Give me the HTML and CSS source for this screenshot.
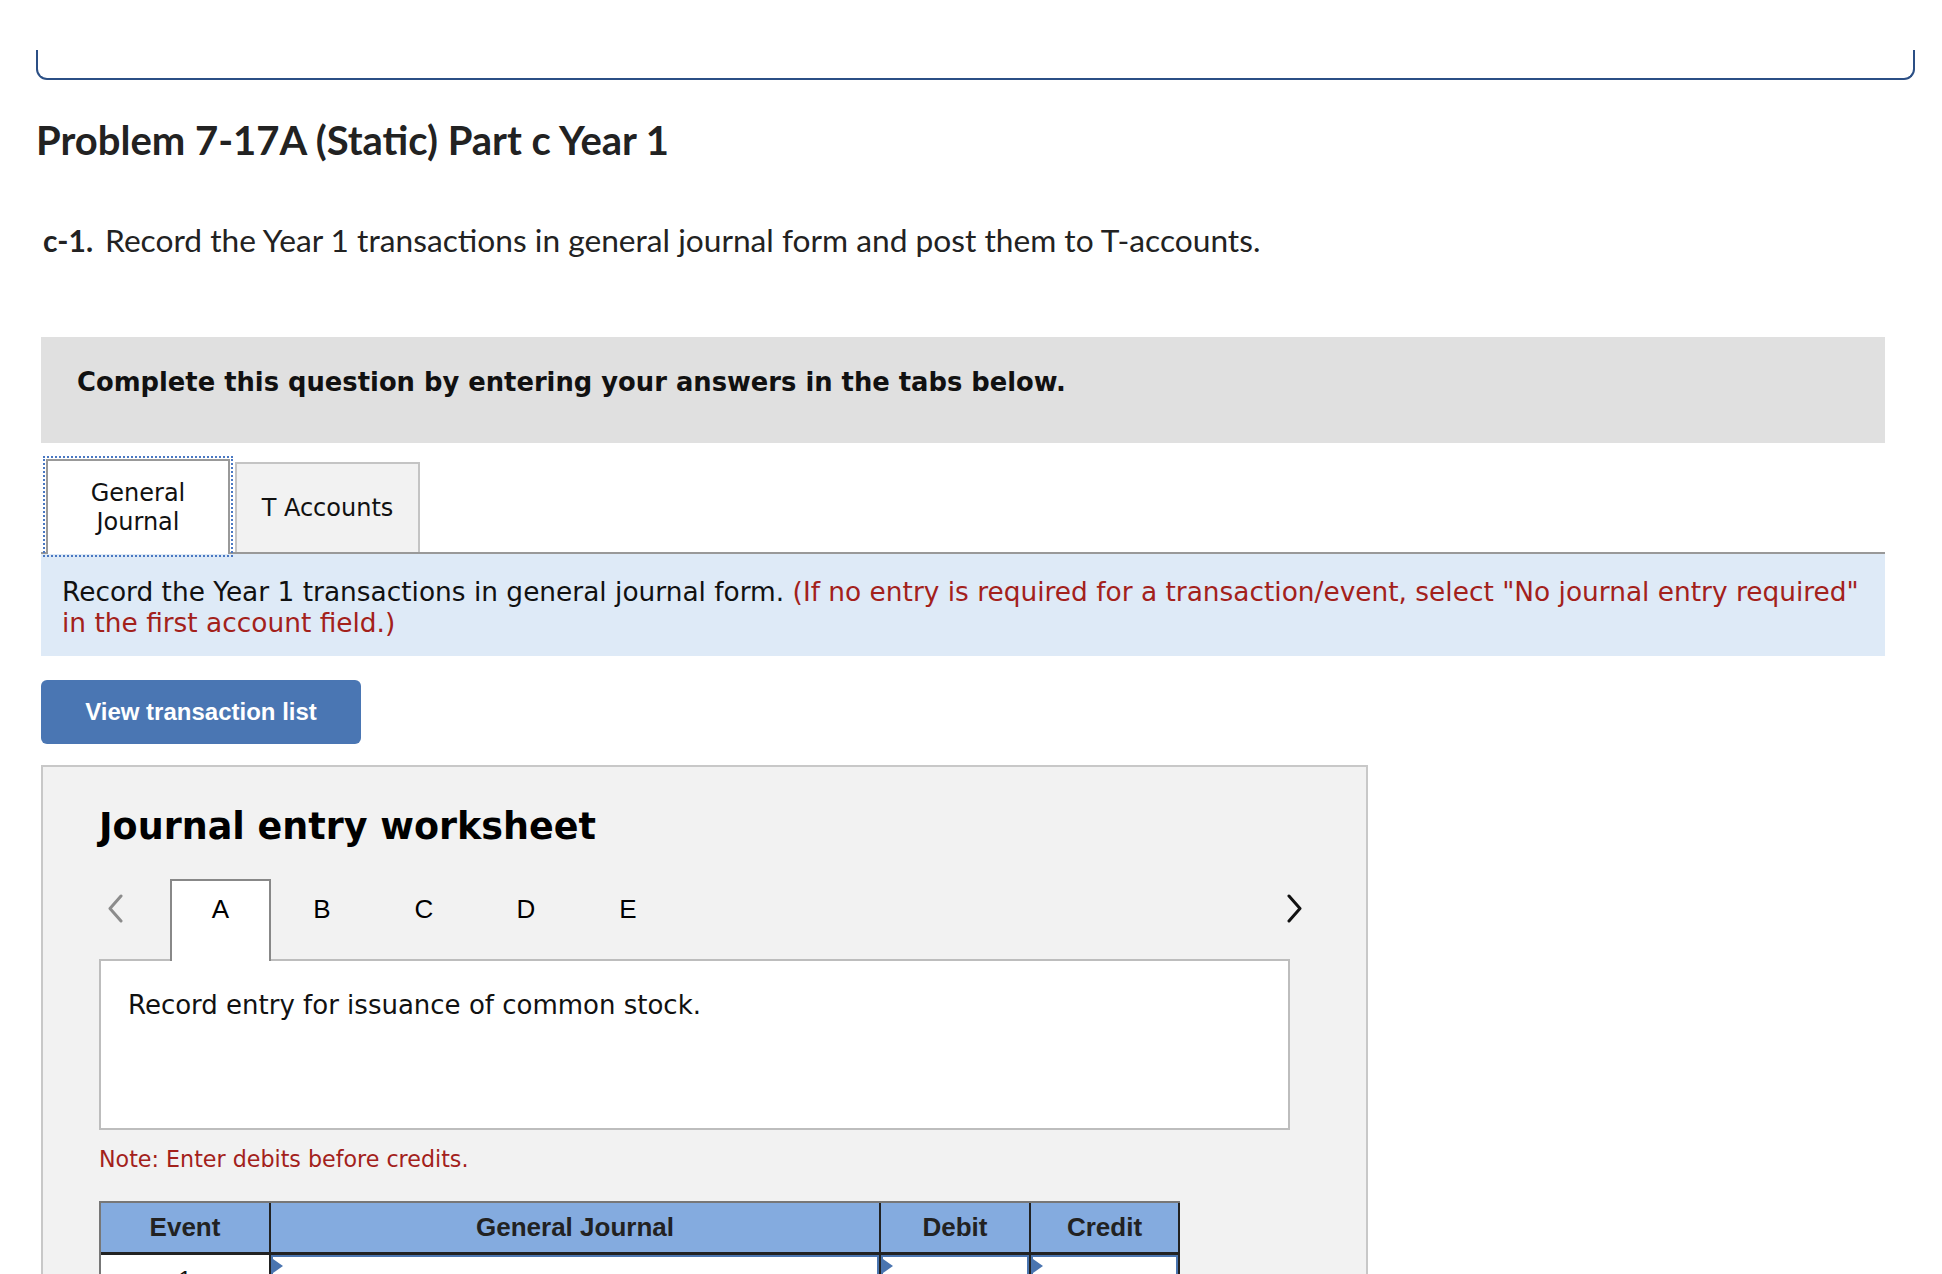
FILE: index.html
```html
<!DOCTYPE html>
<html lang="en">
<head>
<meta charset="utf-8">
<title>Problem 7-17A (Static) Part c Year 1</title>
<link rel="stylesheet" href="styles.css">
</head>
<body>
<div class="topbox"></div>
<h1 class="title">Problem 7-17A (Static) Part c Year 1</h1>
<p class="part"><b class="part-num">c-1.</b>Record the Year 1 transactions in general journal form and post them to T-accounts.</p>
<div class="main">
  <div class="instr">Complete this question by entering your answers in the tabs below.</div>
  <div class="qtabs">
    <div class="qtab active"><span class="qtab-label">General<br>Journal</span></div>
    <div class="qtab"><span class="qtab-label">T Accounts</span></div>
  </div>
  <div class="info">Record the Year 1 transactions in general journal form. <span class="red">(If no entry is required for a transaction/event, select "No journal entry required" in the first account field.)</span></div>
  <button class="btn" type="button">View transaction list</button>
  <section class="ws">
    <h2 class="ws-title">Journal entry worksheet</h2>
    <div class="strip">
      <span class="arrow prev"><svg width="16" height="29" viewBox="0 0 16 29"><polyline points="14,2 3,14.5 14,27" fill="none" stroke="#8c8c8c" stroke-width="3" stroke-linecap="round" stroke-linejoin="round"/></svg></span>
      <div class="letters">
        <span class="lt active">A</span>
        <span class="lt">B</span>
        <span class="lt">C</span>
        <span class="lt">D</span>
        <span class="lt">E</span>
      </div>
      <span class="arrow next"><svg width="16" height="29" viewBox="0 0 16 29"><polyline points="2,2 13,14.5 2,27" fill="none" stroke="#111" stroke-width="3" stroke-linecap="round" stroke-linejoin="round"/></svg></span>
    </div>
    <div class="entry">Record entry for issuance of common stock.</div>
    <p class="note">Note: Enter debits before credits.</p>
    <table class="jt">
      <thead>
        <tr><th class="c-ev">Event</th><th class="c-gj">General Journal</th><th class="c-dr">Debit</th><th class="c-cr">Credit</th></tr>
      </thead>
      <tbody>
        <tr>
          <td class="ev">1</td>
          <td class="inp"><div class="box"></div></td>
          <td class="inp"><div class="box"></div></td>
          <td class="inp"><div class="box"></div></td>
        </tr>
      </tbody>
    </table>
  </section>
</div>
</body>
</html>
```
FILE: styles.css
```css
* { box-sizing: border-box; }
body {
  margin: 0;
  background: #ffffff;
  color: #1c1c1c;
  font-family: "DejaVu Sans", Verdana, sans-serif;
}
.topbox {
  margin: 50px 27px 0 36px;
  height: 30px;
  border: 2px solid #2b4f85;
  border-top: none;
  border-radius: 0 0 11px 11px;
}
.title {
  margin: 40px 0 0 36px;
  font: 700 40px/40px Lato, "Liberation Sans", sans-serif;
  color: #222;
}
.part {
  margin: 62px 0 0 43px;
  font: 400 31.7px/36px Lato, "Liberation Sans", sans-serif;
  color: #222;
}
.part-num {
  font-weight: 700;
  font-size: 30px;
  margin-right: 12px;
}
.main {
  margin: 79px 0 0 41px;
  width: 1844px;
}
.instr {
  height: 106px;
  background: #e0e0e0;
  padding: 29px 0 0 36px;
  font: 700 25.8px/32px "DejaVu Sans", Verdana, sans-serif;
  color: #111;
}
.qtabs {
  display: flex;
  align-items: flex-end;
  gap: 5px;
  margin-top: 16px;
  height: 95px;
  padding-left: 5px;
  border-bottom: 2px solid #999;
}
.qtab {
  display: flex;
  align-items: center;
  justify-content: center;
  text-align: center;
  width: 185px;
  height: 90px;
  background: #f2f2f2;
  border: 2px solid #c4c4c4;
  border-bottom: none;
  font: 24px/29px "DejaVu Sans", Verdana, sans-serif;
  color: #111;
}
.qtab.active {
  width: 184px;
  height: 95px;
  margin-bottom: -2px;
  background: #fff;
  border-color: #999;
  outline: 2px dotted #4a78c2;
  outline-offset: 1px;
}
.info {
  background: #deeaf7;
  padding: 22px 12px 18px 21px;
  font: 26.4px/31px "DejaVu Sans", Verdana, sans-serif;
  color: #111;
}
.red { color: #a3211b; }
.btn {
  display: block;
  margin-top: 24px;
  width: 320px;
  height: 64px;
  background: #4a76b3;
  color: #fff;
  border: none;
  border-radius: 6px;
  font: 700 24px "Liberation Sans", Arial, sans-serif;
  padding: 0;
}
.ws {
  margin-top: 21px;
  width: 1327px;
  border: 2px solid #c8c8c8;
  background: #f2f2f2;
  padding: 38px 0 60px 56px;
}
.ws-title {
  margin: 0;
  font: 700 36.5px/44px "DejaVu Sans", Verdana, sans-serif;
  color: #000;
}
.strip {
  display: flex;
  align-items: flex-start;
  margin-top: 30px;
  width: 1204px;
  height: 80px;
}
.arrow {
  display: block;
  width: 16px;
  height: 29px;
  margin-top: 15px;
}
.arrow svg { display: block; }
.prev { margin-left: 8px; margin-right: 47px; }
.next { margin-left: auto; }
.letters {
  display: flex;
}
.lt {
  width: 102px;
  height: 80px;
  padding-top: 15px;
  text-align: center;
  font: 400 26px/30px "Liberation Sans", Arial, sans-serif;
  color: #000;
}
.lt.active {
  position: relative;
  z-index: 1;
  width: 101px;
  height: 82px;
  background: #fff;
  border: 2px solid #888;
  border-bottom: none;
  padding-top: 13px;
}
.entry {
  width: 1191px;
  height: 171px;
  background: #fff;
  border: 2px solid #bdbdbd;
  padding: 29px 27px;
  font: 26px/30px "DejaVu Sans", Verdana, sans-serif;
  color: #111;
}
.note {
  margin: 15px 0 0;
  font: 22.2px/28px "DejaVu Sans", Verdana, sans-serif;
  color: #a3211b;
}
.jt {
  margin-top: 28px;
  width: 1081px;
  border-collapse: separate;
  border-spacing: 0;
  border-top: 2px solid #777;
  border-left: 2px solid #777;
  table-layout: fixed;
}
.jt th {
  height: 52px;
  background: #84abdf;
  border-right: 2px solid #222;
  border-bottom: 3px solid #222;
  font: 700 26px "Liberation Sans", Arial, sans-serif;
  color: #222;
  text-align: center;
  padding: 0;
}
.c-ev { width: 170px; }
.c-gj { width: 610px; }
.c-dr { width: 150px; }
.c-cr { width: 149px; }
.jt td {
  height: 50px;
  background: #fff;
  border-right: 2px solid #222;
  padding: 0;
}
.jt td.ev {
  text-align: center;
  font: 400 24px "Liberation Sans", Arial, sans-serif;
  color: #111;
}
.box {
  position: relative;
  height: 50px;
  border: 2px solid #4a75b0;
  background: #fff;
}
.box::before {
  content: "";
  position: absolute;
  left: 0;
  top: 2px;
  border-top: 7px solid transparent;
  border-bottom: 7px solid transparent;
  border-left: 10px solid #4a75b0;
}
```
